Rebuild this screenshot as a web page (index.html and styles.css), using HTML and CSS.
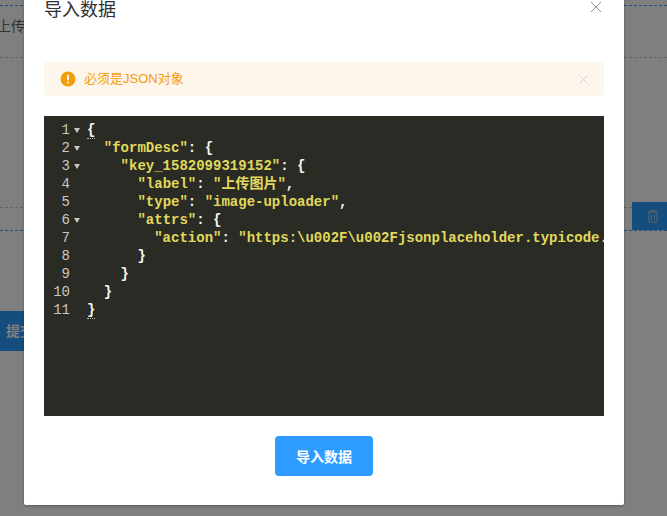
FILE: index.html
```html
<!DOCTYPE html>
<html lang="zh">
<head>
<meta charset="utf-8">
<title>导入数据</title>
<link rel="stylesheet" href="styles.css">
</head>
<body>
<div class="page">
  <div class="form-item">
    <div class="form-label">上传图片</div>
  </div>
  <div class="form-gap"></div>
  <div class="toolbar"><span class="trash"><svg width="12" height="14" viewBox="0 0 12 14" fill="none" stroke="currentColor" stroke-width="1"><path d="M1 3h10M4 3V1.500h4V3M2 3v10h8V3M4.500 5.500v5M7.500 5.500v5"/></svg></span></div>
  <div class="submit">提交</div>
</div>
<div class="overlay">
  <div class="dialog">
    <div class="dialog-head">
      <span class="dialog-title">导入数据</span>
      <svg class="dialog-close" width="12" height="12" viewBox="0 0 12 12" stroke="#909399" stroke-width="1"><path d="M1 1l10 10M11 1L1 11"/></svg>
    </div>
    <div class="alert">
      <svg class="alert-icon" width="16" height="16" viewBox="0 0 16 16"><circle cx="8" cy="8" r="7.500" fill="#f39c0b"/><rect x="7" y="3.500" width="2" height="6" rx="1" fill="#fdf6ec"/><circle cx="8" cy="11.500" r="1.100" fill="#fdf6ec"/></svg>
      <span class="alert-text">必须是JSON对象</span>
      <svg class="alert-close" width="9" height="9" viewBox="0 0 9 9" stroke="#d4d4d6" stroke-width="1"><path d="M.5.500l8 8M8.500.500l-8 8"/></svg>
    </div>
    <div class="editor">
      <div class="gutter">
        <div class="num fold">1</div>
        <div class="num fold">2</div>
        <div class="num fold">3</div>
        <div class="num">4</div>
        <div class="num">5</div>
        <div class="num fold">6</div>
        <div class="num">7</div>
        <div class="num">8</div>
        <div class="num">9</div>
        <div class="num">10</div>
        <div class="num">11</div>
      </div>
      <pre class="code"><span class="p match">{</span>
  <span class="s">"formDesc"</span><span class="p">: {</span>
    <span class="s">"key_1582099319152"</span><span class="p">: {</span>
      <span class="s">"label"</span><span class="p">: </span><span class="s">"上传图片"</span><span class="p">,</span>
      <span class="s">"type"</span><span class="p">: </span><span class="s">"image-uploader"</span><span class="p">,</span>
      <span class="s">"attrs"</span><span class="p">: {</span>
        <span class="s">"action"</span><span class="p">: </span><span class="s">"https:\u002F\u002Fjsonplaceholder.typicode.</span>
      <span class="p">}</span>
    <span class="p">}</span>
  <span class="p">}</span>
<span class="p match">}</span></pre>
    </div>
    <div class="dialog-foot"><button class="primary" type="button">导入数据</button></div>
  </div>
</div>
</body>
</html>
```
FILE: styles.css
```css
html, body { margin: 0; padding: 0; height: 100%; overflow: hidden; }
body { width: 667px; height: 516px; position: relative; background: #fff; font-family: "Liberation Sans", "Noto Sans CJK SC", sans-serif; color: #606266; }

.page { height: 516px; display: flex; flex-direction: column; overflow: hidden; }
.form-item { margin-top: 5px; height: 51px; border-top: 1px dashed #409eff; border-bottom: 1px dashed #c8c9cc; box-sizing: content-box; }
.form-label { font-size: 14px; line-height: 14px; margin-top: 13px; margin-left: -3px; }
.form-gap { height: 149px; border-bottom: 1px dashed #c8c9cc; }
.toolbar { height: 28px; margin-top: -6px; border-bottom: 1px dashed #409eff; display: flex; justify-content: flex-end; }
.trash { width: 35px; height: 28px; box-sizing: border-box; padding-right: 8px; background: #2d9bff; color: #b9c4d0; display: flex; align-items: center; justify-content: flex-end; }
.submit { margin-top: 80px; width: 56px; height: 40px; margin-left: -30px; padding-left: 36px; background: #2d9bff; color: #fff; font-size: 14px; font-weight: 700; line-height: 40px; }

.overlay { position: absolute; inset: 0; background: rgba(0, 0, 0, .5); }
.dialog { position: absolute; left: 24px; top: -12px; width: 600px; height: 517px; box-sizing: border-box; background: #fff; border-radius: 2px; box-shadow: 0 1px 3px rgba(0, 0, 0, .3); padding: 0 20px; }
.dialog-head { height: 74px; padding-top: 10px; box-sizing: border-box; display: flex; justify-content: space-between; align-items: flex-start; }
.dialog-title { font-size: 18px; line-height: 24px; color: #303133; }
.dialog-close { margin-top: 3px; margin-right: 2px; }
.alert { height: 34px; background: #fdf6ec; border-radius: 4px; display: flex; align-items: center; padding: 0 16px; }
.alert-icon { margin-right: 8px; }
.alert-text { font-size: 13px; line-height: 16px; color: #f39c0b; flex: 1; }
.alert-close { margin-right: 0; }
.editor { margin-top: 20px; height: 300px; background: #2a2b25; display: flex; overflow: hidden; padding-top: 4.500px; box-sizing: border-box; font-family: "Liberation Mono", "Noto Sans CJK SC", monospace; font-size: 14px; line-height: 18.100px; }
.gutter { width: 43px; flex: none; color: #c8c8c0; }
.num { width: 26px; text-align: right; position: relative; }
.fold::after { content: ""; position: absolute; left: 30px; top: 7px; border-left: 3px solid transparent; border-right: 3px solid transparent; border-top: 5px solid #c8c8c0; }
.code { margin: 0; font: inherit; font-weight: 700; white-space: pre; }
.s { color: #e0d95c; }
.p { color: #f5f5ef; }
.match { border-bottom: 1px dotted #b8b8b0; }
.dialog-foot { display: flex; justify-content: center; margin-top: 19.500px; }
.primary { width: 98px; height: 40px; border: 0; border-radius: 4px; background: #2d9bff; color: #fff; font: 700 14px "Liberation Sans", "Noto Sans CJK SC", sans-serif; }
```
